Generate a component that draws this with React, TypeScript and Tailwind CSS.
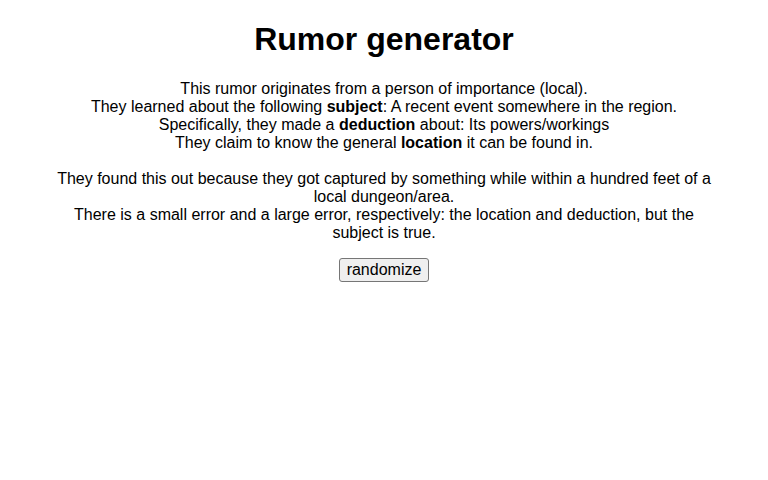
export default function App() {
  return (
    <main className="px-2 text-center text-base leading-[normal] text-black font-['Liberation_Sans',Arial,sans-serif]">
      <h1 className="my-[21.44px] text-[32px] font-bold leading-[normal]">
        Rumor generator
      </h1>
      <div className="mx-auto max-w-[670px]">
        <div>This rumor originates from a person of importance (local).</div>
        <div>
          They learned about the following <b>subject</b>: A recent event
          somewhere in the region.
        </div>
        <div>
          Specifically, they made a <b>deduction</b> about: Its powers/workings
        </div>
        <div>
          They claim to know the general <b>location</b> it can be found in.
        </div>
        <br />
        <div>
          They found this out because they got captured by something while
          within a hundred feet of a local dungeon/area.
        </div>
        <div>
          There is a small error and a large error, respectively: the location
          and deduction, but the subject is true.
        </div>
      </div>
      <p className="my-4">
        <button className="rounded-[3px] border border-[#767676] bg-[#efefef] px-[7px] py-[2px]">
          randomize
        </button>
      </p>
    </main>
  );
}
